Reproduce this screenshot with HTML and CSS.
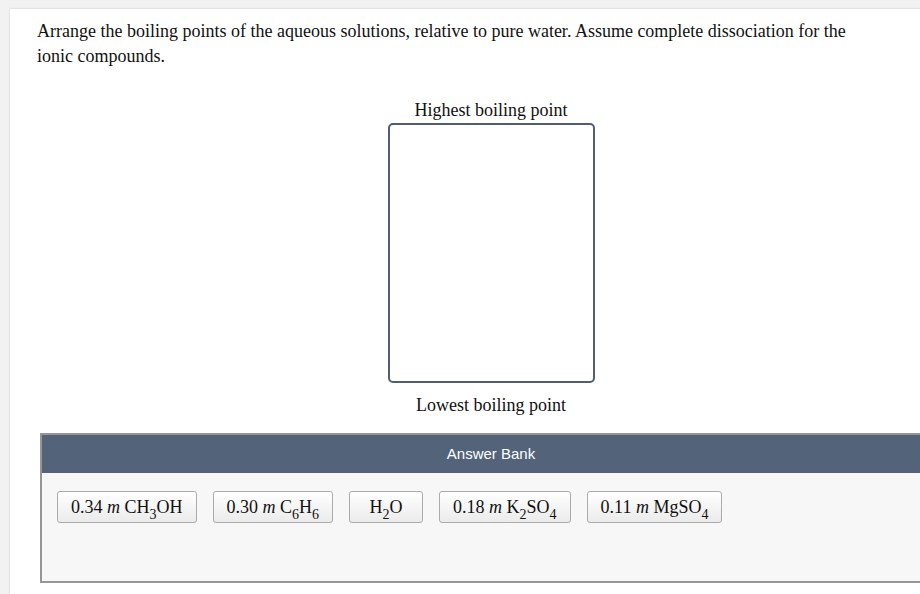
FILE: index.html
```html
<!DOCTYPE html>
<html>
<head>
<meta charset="utf-8">
<link rel="stylesheet" href="styles.css">
</head>
<body>
<div class="card">
  <p class="question">Arrange the boiling points of the aqueous solutions, relative to pure water. Assume complete dissociation for the ionic compounds.</p>
  <div class="sorter">
    <div class="rank">
      <div class="label">Highest boiling point</div>
      <div class="dropbox"></div>
      <div class="label label-bottom">Lowest boiling point</div>
    </div>
    <div class="bank">
      <div class="bank-head">Answer Bank</div>
      <div class="bank-body">
        <div class="chip">0.34 <i>m</i> CH<sub>3</sub>OH</div>
        <div class="chip">0.30 <i>m</i> C<sub>6</sub>H<sub>6</sub></div>
        <div class="chip">H<sub>2</sub>O</div>
        <div class="chip">0.18 <i>m</i> K<sub>2</sub>SO<sub>4</sub></div>
        <div class="chip">0.11 <i>m</i> MgSO<sub>4</sub></div>
      </div>
    </div>
  </div>
</div>
</body>
</html>
```

FILE: styles.css
```css
html, body {
  margin: 0;
  padding: 0;
  overflow: hidden;
  background: #f2f2f2;
}
body {
  width: 920px;
  height: 594px;
}
.card {
  margin: 9px 0 0 10px;
  width: 960px;
  min-height: 620px;
  background: #fff;
  box-shadow: 0 0 2px rgba(0, 0, 0, 0.18);
  padding: 10px 0 0 27px;
  box-sizing: border-box;
  font-family: "Liberation Serif", "Times New Roman", serif;
  font-size: 18px;
  line-height: 25px;
  color: #111;
}
.question {
  margin: 0;
  width: 830px;
}
.sorter {
  margin: 28px 0 0 3px;
  width: 902px;
}
.rank {
  display: flex;
  flex-direction: column;
  align-items: center;
}
.label {
  text-align: center;
  line-height: 26px;
}
.label-bottom {
  margin-top: 9px;
}
.dropbox {
  width: 207px;
  height: 260px;
  box-sizing: border-box;
  border: 2px solid #4f5e72;
  border-radius: 5px;
  background: #fff;
}
.bank {
  margin-top: 15px;
  border: 2px solid #969696;
}
.bank-head {
  height: 38px;
  background: #52637a;
  color: #fff;
  font-family: "Liberation Sans", Arial, sans-serif;
  font-size: 15px;
  line-height: 38px;
  text-align: center;
}
.bank-body {
  background: #f7f7f7;
  min-height: 108px;
  box-sizing: border-box;
  padding: 18px 15px;
  display: flex;
  align-items: flex-start;
  gap: 16px;
}
.chip {
  height: 32px;
  min-width: 74px;
  box-sizing: border-box;
  padding: 0 13px;
  border: 1px solid #ababab;
  border-radius: 3px;
  background: linear-gradient(#ffffff, #ebebeb);
  line-height: 30px;
  text-align: center;
  white-space: nowrap;
  color: #111;
}
.chip sub {
  font-size: 14px;
  line-height: 0;
  vertical-align: -6px;
}
```
